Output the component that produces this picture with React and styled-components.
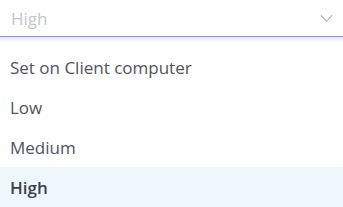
import styled, { createGlobalStyle } from 'styled-components';

const GlobalStyle = createGlobalStyle`
	body {
		margin: 0;
		background: #fff;
		font-family: "Open Sans", "Noto Sans", sans-serif;
	}
`;

const options = ['Set on Client computer', 'Low', 'Medium', 'High'];
const selected = 'High';

export default function App() {
	return (
		<>
			<GlobalStyle />
			<Container>
				<Trigger>
					<Value>{selected}</Value>
					<Chevron viewBox="0 0 14 9">
						<path d="M1 1l6 6.5L13 1" />
					</Chevron>
				</Trigger>
				<Menu>
					{options.map((o) => (
						<Item key={o} $active={o === selected}>
							{o}
						</Item>
					))}
				</Menu>
			</Container>
		</>
	);
}

const Container = styled.div`
	width: 343px;
	height: 207px;
	overflow: hidden;
`;

const Trigger = styled.div`
	display: flex;
	align-items: center;
	justify-content: space-between;
	height: 36px;
	padding: 0 10px 0 11px;
	border-bottom: 1px solid #7b9fd6;
	box-shadow: 0 1px 0 #dde3ee, 0 3px 0 #eef0f4, 0 5px 0 #f6f7f9;
`;

const Value = styled.span`
	font-size: 17px;
	color: #c2c5cb;
`;

const Chevron = styled.svg`
	width: 13px;
	height: 9px;
	fill: none;
	stroke: #b4b7bd;
	stroke-width: 1.2;
`;

const Menu = styled.div`
	display: flex;
	flex-direction: column;
	padding-top: 10px;
`;

const Item = styled.div`
	display: flex;
	align-items: center;
	height: 40px;
	padding-left: 10px;
	font-size: 17px;
	color: ${({ $active }) => ($active ? '#3b4150' : '#4d5361')};
	font-weight: ${({ $active }) => ($active ? 600 : 400)};
	background: ${({ $active }) => ($active ? '#eff7fe' : 'transparent')};
`;
